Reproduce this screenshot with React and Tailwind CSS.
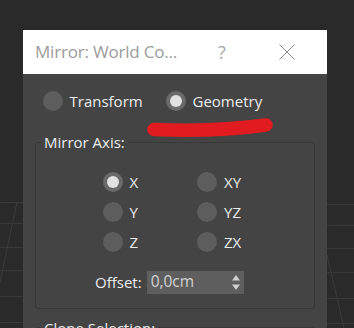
import React from "react";

const Radio = ({ checked }) =>
  checked ? (
    <span className="flex h-[20px] w-[20px] shrink-0 items-center justify-center rounded-full bg-[#6a6a6a]">
      <span className="h-[12px] w-[12px] rounded-full bg-[#e2e2e2]" />
    </span>
  ) : (
    <span className="block h-[20px] w-[20px] shrink-0 rounded-full bg-[#5d5d5d]" />
  );

const Opt = ({ label, checked, w }) => (
  <div className={`flex items-center ${w}`}>
    <Radio checked={checked} />
    <span className="ml-[7px] leading-[20px]">{label}</span>
  </div>
);

export default function App() {
  return (
    <div className="relative h-[328px] w-[354px] overflow-hidden bg-[#2a2a2a] pt-[30px] font-['Open_Sans','Noto_Sans',sans-serif] text-[15px] text-[#ececec]">
      <svg className="absolute inset-0" width="354" height="328" viewBox="0 0 354 328">
        <g stroke="#3b3b3b" strokeWidth="1">
          <line x1="0" y1="202.5" x2="354" y2="204.5" />
          <line x1="0" y1="223.5" x2="354" y2="225.5" />
          <line x1="0" y1="247.5" x2="354" y2="248.5" />
          <line x1="0" y1="270.5" x2="354" y2="272.5" />
          <line x1="0" y1="296.5" x2="354" y2="298.5" />
          <line x1="0" y1="322.5" x2="354" y2="323.5" />
          <line x1="17" y1="202" x2="0" y2="282" />
          <line x1="327" y1="255" x2="344" y2="328" />
        </g>
      </svg>

      <div className="relative ml-[23px] w-[304px]">
        <div className="flex h-[44px] items-center bg-white pl-[12px]">
          <span className="w-[183px] text-[17px] tracking-[-0.2px] text-[#9c9c9c]">Mirror: World Co...</span>
          <span className="text-[18px] text-[#a8a8a8]">?</span>
          <svg className="ml-[53px]" width="16" height="16" viewBox="0 0 16 16">
            <path d="M0.5 0.5 L15.5 15.5 M15.5 0.5 L0.5 15.5" stroke="#8a8a8a" strokeWidth="1" />
          </svg>
        </div>

        <div className="bg-[#444444] px-[12px] pt-[17px]">
          <div className="flex items-center pl-[7.5px]">
            <Opt label="Transform" w="w-[123px]" />
            <Opt label="Geometry" checked />
          </div>

          <fieldset className="mt-[20px] rounded-[3px] border border-[#383838] pb-[14px]">
            <legend className="ml-[5px] px-[3px] leading-[22px]">Mirror Axis:</legend>
            <div className="flex flex-col gap-[10px] pl-[66.5px] pt-[19px]">
              <div className="flex">
                <Opt label="X" checked w="w-[94.5px]" />
                <Opt label="XY" />
              </div>
              <div className="flex">
                <Opt label="Y" w="w-[94.5px]" />
                <Opt label="YZ" />
              </div>
              <div className="flex">
                <Opt label="Z" w="w-[94.5px]" />
                <Opt label="ZX" />
              </div>
            </div>
            <div className="mt-[18.5px] flex items-center pl-[59px]">
              <span className="leading-[23px]">Offset:</span>
              <div className="ml-[5px] flex h-[23px] w-[97px] items-center justify-between bg-[#5e5e5e] pl-[4px] pr-[4px]">
                <span className="text-[15.5px] text-[#d2d2d2]">0,0cm</span>
                <svg width="8" height="15" viewBox="0 0 8 15">
                  <path d="M4 0 L8 5.5 L0 5.5 Z M0 9.5 L8 9.5 L4 15 Z" fill="#cfcfcf" />
                </svg>
              </div>
            </div>
          </fieldset>

          <fieldset className="mt-[8px] rounded-[3px] border border-[#383838] pb-[14px]">
            <legend className="ml-[5px] px-[3px] leading-[22px]">Clone Selection:</legend>
            <div className="h-[40px]" />
          </fieldset>
        </div>
      </div>

      <svg className="pointer-events-none absolute inset-0" width="354" height="328" viewBox="0 0 354 328">
        <path d="M154 129.5 Q 215 132 266 125" stroke="#e11b20" strokeWidth="13.5" strokeLinecap="round" fill="none" />
      </svg>
    </div>
  );
}
